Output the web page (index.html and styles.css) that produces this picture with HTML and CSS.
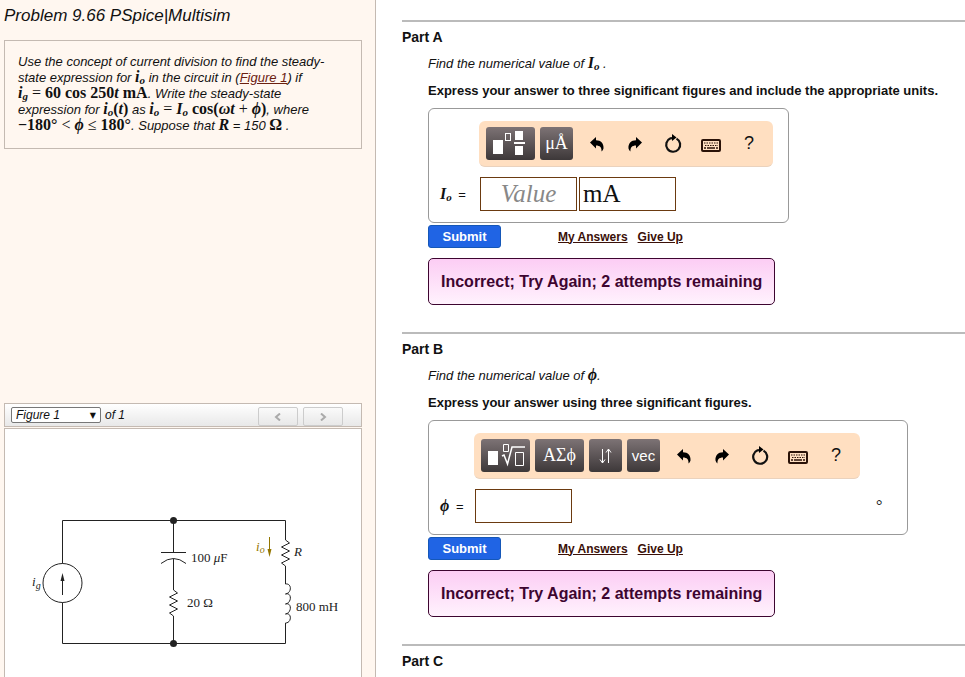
FILE: index.html
```html
<!DOCTYPE html>
<html lang="en">
<head>
    <meta charset="UTF-8">
    <meta name="viewport" content="width=device-width, initial-scale=1.0">
    <title>Problem 9.66 PSpice|Multisim</title>
    <link rel="stylesheet" href="styles.css">
</head>
<body>
    <!-- icons shared by both toolbars -->
    <svg class="sprite" aria-hidden="true">
        <symbol id="undo" viewBox="0 0 16 16">
            <path d="M1 6.5 7 1V4.2C12 4.2 15 7.5 14.5 12.5Q14 14.5 12.5 15.5C12.8 11.5 11 9.5 7 9.5V12.5Z"/>
        </symbol>
        <symbol id="reset" viewBox="0 0 20 20">
            <path d="M13.5 4.6A7 7 0 1 1 7.5 4.3L10 4" fill="none" stroke="#111" stroke-width="2.2"/>
            <path d="M9 0 13.5 3.5 9 7Z"/>
        </symbol>
        <symbol id="keyboard" viewBox="0 0 20 13">
            <rect x="1" y="1" width="18" height="11" rx="1" fill="none" stroke="#2a1208" stroke-width="2"/>
            <path d="M3 4H17M4 6.5H17" stroke="#2a1208" stroke-width="1.2" stroke-dasharray="1.5 1"/>
            <path d="M3 9H5M6 9H14M15 9H17" stroke="#2a1208" stroke-width="1.5"/>
        </symbol>
    </svg>

    <div class="page">
        <aside class="sidebar">
            <h1>Problem 9.66 PSpice|Multisim</h1>

            <div class="problem">
                Use the concept of current division to find the steady-<br>
                state expression for <span class="math"><i>i<sub>o</sub></i></span> in the circuit in (<a href="#figure">Figure 1</a>) if<br>
                <span class="math"><i>i<sub>g</sub></i><span class="op">=</span>60 cos 250<i>t</i> mA</span>. Write the steady-state<br>
                expression for <span class="math"><i>i<sub>o</sub></i>(<i>t</i>)</span> as <span class="math"><i>i<sub>o</sub></i><span class="op">=</span><i>I<sub>o</sub></i> cos(<i>ωt</i><span class="op">+</span><i>ϕ</i>)</span>, where<br>
                <span class="math">−180°<span class="op">&lt;</span><i>ϕ</i><span class="op">≤</span>180°</span>. Suppose that <span class="math"><i>R</i></span> = 150 <span class="math">Ω</span> .
            </div>

            <div class="figure-bar">
                <span class="picker">
                    <select id="figure-select" aria-label="Figure">
                        <option>Figure 1</option>
                    </select>
                </span>
                <label for="figure-select">of 1</label>
                <div class="pager">
                    <button type="button" aria-label="Previous figure"><svg viewBox="0 0 8 8"><path d="M6 0.5 2 4 6 7.5"/></svg></button>
                    <button type="button" aria-label="Next figure"><svg viewBox="0 0 8 8"><path d="M2 0.5 6 4 2 7.5"/></svg></button>
                </div>
            </div>

            <div class="figure" id="figure">
                <svg class="circuit" viewBox="0 0 356 246" role="img" aria-label="Circuit diagram">
                    <!-- wires -->
                    <path class="wire" d="M57.5 133.5V90.5H280.5V110M57.5 172.5V213.5H280.5V193M168.5 90.5V122M168.5 128.5V160M168.5 186V213.5M280.5 136V154"/>
                    <circle cx="168.5" cy="90.5" r="3.5"/>
                    <circle cx="168.5" cy="213.5" r="3.5"/>
                    <!-- current source -->
                    <circle class="wire" cx="57.5" cy="153" r="19.5"/>
                    <path class="wire" d="M57.5 165V149"/>
                    <path d="M57.5 143 59.5 151H55.5Z"/>
                    <!-- capacitor -->
                    <path class="wire" d="M156 122.5H181M156 133.5Q168.5 123.5 181 133.5"/>
                    <!-- resistors -->
                    <path class="wire" d="M168.5 160 172.5 163 164.5 167 172.5 171 164.5 175 172.5 179 164.5 183 168.5 186"/>
                    <path class="wire" d="M280.5 110 284.5 113 276.5 117 284.5 121 276.5 125 284.5 129 276.5 133 280.5 136"/>
                    <!-- inductor -->
                    <path class="wire" d="M280.5 154C287 153 287 163 280.5 164C287 162 287 173 280.5 174C287 172 287 183 280.5 184C287 182 287 193 280.5 193"/>
                    <g class="current">
                        <path class="wire" d="M264.5 107V122"/>
                        <path d="M264.5 127 262.5 119H266.5Z"/>
                        <text x="251" y="121" font-style="italic">i<tspan class="small" dy="2">o</tspan></text>
                    </g>
                    <text x="27" y="156" font-style="italic">i<tspan class="small" dy="3">g</tspan></text>
                    <text x="186" y="132">100 <tspan font-style="italic">μ</tspan>F</text>
                    <text x="182" y="177">20 Ω</text>
                    <text x="289" y="126" font-style="italic">R</text>
                    <text x="291" y="181">800 mH</text>
                </svg>
            </div>
        </aside>

        <main>
            <section class="part">
                <h2>Part A</h2>
                <div class="content">
                    <p class="question">Find the numerical value of <span class="math"><i>I<sub>o</sub></i></span> .</p>
                    <p class="express">Express your answer to three significant figures and include the appropriate units.</p>
                    <div class="answer">
                        <div class="toolbar">
                            <button type="button" class="tool wide" aria-label="Templates">
                                <svg viewBox="0 0 49 33">
                                    <path fill="#fff" d="M7 13H17V27H7ZM29 4H37V13H29ZM29 19H37V28H29ZM28 15H39V17H28Z"/>
                                    <rect x="19.5" y="6.5" width="5" height="7" fill="none" stroke="#fff"/>
                                </svg>
                            </button>
                            <button type="button" class="tool" aria-label="Units">μÅ</button>
                            <div class="icons">
                                <button type="button" aria-label="Undo"><svg class="arrow"><use href="#undo"/></svg></button>
                                <button type="button" aria-label="Redo"><svg class="arrow flip"><use href="#undo"/></svg></button>
                                <button type="button" aria-label="Reset"><svg class="reset"><use href="#reset"/></svg></button>
                                <button type="button" aria-label="Keyboard shortcuts"><svg class="keyboard"><use href="#keyboard"/></svg></button>
                                <button type="button">?</button>
                            </div>
                        </div>
                        <label for="io"><span class="math"><i>I<sub>o</sub></i></span> =</label>
                        <div class="fields">
                            <input type="text" id="io" class="value" placeholder="Value">
                            <input type="text" value="mA" aria-label="Units">
                        </div>
                    </div>
                    <div class="actions">
                        <button type="button" class="submit">Submit</button>
                        <a href="#">My Answers</a>
                        <a href="#">Give Up</a>
                    </div>
                    <div class="feedback">Incorrect; Try Again; 2 attempts remaining</div>
                </div>
            </section>

            <section class="part">
                <h2>Part B</h2>
                <div class="content">
                    <p class="question">Find the numerical value of <span class="math"><i>ϕ</i></span>.</p>
                    <p class="express">Express your answer using three significant figures.</p>
                    <div class="answer angle">
                        <div class="toolbar">
                            <button type="button" class="tool wide" aria-label="Templates">
                                <svg viewBox="0 0 49 33">
                                    <path fill="#fff" d="M7 12H17V26H7Z"/>
                                    <path fill="none" stroke="#fff" d="M22.5 5.5H27.5V12.5H22.5ZM34.5 13.5H42.5V26.5H34.5Z"/>
                                    <path fill="none" stroke="#fff" stroke-width="1.5" d="M21 17 23 16 26.5 25 31 8H44"/>
                                </svg>
                            </button>
                            <button type="button" class="tool wide">ΑΣϕ</button>
                            <button type="button" class="tool" aria-label="Arrows">
                                <svg viewBox="0 0 33 33" fill="none" stroke="#fff">
                                    <path d="M13.5 10V24M11 20.5 13.5 24 16 20.5M19.5 24V10M17 13.5 19.5 10 22 13.5"/>
                                </svg>
                            </button>
                            <button type="button" class="tool vec">vec</button>
                            <div class="icons">
                                <button type="button" aria-label="Undo"><svg class="arrow"><use href="#undo"/></svg></button>
                                <button type="button" aria-label="Redo"><svg class="arrow flip"><use href="#undo"/></svg></button>
                                <button type="button" aria-label="Reset"><svg class="reset"><use href="#reset"/></svg></button>
                                <button type="button" aria-label="Keyboard shortcuts"><svg class="keyboard"><use href="#keyboard"/></svg></button>
                                <button type="button">?</button>
                            </div>
                        </div>
                        <label for="phi"><span class="math"><i>ϕ</i></span> =</label>
                        <div class="fields">
                            <input type="text" id="phi">
                        </div>
                        <span class="unit">°</span>
                    </div>
                    <div class="actions">
                        <button type="button" class="submit">Submit</button>
                        <a href="#">My Answers</a>
                        <a href="#">Give Up</a>
                    </div>
                    <div class="feedback">Incorrect; Try Again; 2 attempts remaining</div>
                </div>
            </section>

            <section class="part">
                <h2>Part C</h2>
            </section>
        </main>
    </div>
</body>
</html>
```
FILE: styles.css
```css
* {
    box-sizing: border-box;
}

body {
    margin: 0;
    font-family: "Liberation Sans", Arial, sans-serif;
    font-size: 13px;
    color: #111;
    background: #fff;
}

button,
input,
select {
    font-family: inherit;
    margin: 0;
}

button {
    cursor: pointer;
}

a {
    color: #3a1008;
}

.sprite {
    display: none;
}

.page {
    display: grid;
    grid-template-columns: 376px 1fr;
    min-height: 100vh;
}

/* Left column */
.sidebar {
    display: flex;
    flex-direction: column;
    padding: 6px 13px 0 4px;
    background: #fff7f0;
    border-right: 1px solid #c4bab2;
}

h1 {
    margin: 0 0 14px;
    font-size: 17px;
    font-weight: normal;
    font-style: italic;
    line-height: 20px;
}

.problem {
    margin-bottom: 254px;
    padding: 13px;
    border: 1px solid #c4bab2;
    font-style: italic;
    line-height: 16px;
    min-height: 109px;
    white-space: nowrap;
}

.problem a {
    color: #6b2010;
}

.math {
    font-family: "Liberation Serif", "Times New Roman", serif;
    font-size: 16px;
    font-weight: bold;
    font-style: normal;
    line-height: 0;
}

.math i {
    font-style: italic;
}

.math sub {
    font-size: 11px;
    line-height: 0;
    vertical-align: -2px;
}

.math .op {
    padding: 0 4px;
    font-weight: normal;
}

.figure-bar {
    display: flex;
    align-items: center;
    height: 24px;
    margin-bottom: 1px;
    padding: 0 18px 0 6px;
    border: 1px solid #c4bab2;
    background: linear-gradient(#fff, #e8e8e8);
    font-size: 12px;
    font-style: italic;
}

.picker {
    position: relative;
    margin-right: 4px;
}

.picker::after {
    content: "▼";
    position: absolute;
    right: 5px;
    top: 4px;
    font-family: "DejaVu Sans", sans-serif;
    font-size: 8px;
    font-style: normal;
    pointer-events: none;
}

.picker select {
    display: block;
    width: 90px;
    height: 16px;
    padding: 0 4px;
    border: 1px solid #777;
    border-radius: 2px;
    background: #fff;
    color: #111;
    font-size: 12px;
    font-style: italic;
    appearance: none;
}

.pager {
    display: flex;
    gap: 5px;
    margin-left: auto;
    align-self: flex-end;
}

.pager button {
    width: 40px;
    height: 19px;
    padding: 0;
    border: 1px solid #ccc;
    border-radius: 2px;
    background: linear-gradient(#fafafa, #e8e8e8);
}

.pager svg {
    width: 8px;
    height: 8px;
    fill: none;
    stroke: #aaa;
    stroke-width: 2;
}

.figure {
    flex: 1;
    padding-top: 1px;
    border: 1px solid #c4bab2;
    border-bottom: 0;
    background: #fff;
}

.circuit {
    display: block;
    width: 100%;
    font-family: "Liberation Serif", "Times New Roman", serif;
    font-size: 13px;
    fill: #222;
}

.circuit .wire {
    fill: none;
    stroke: #222;
}

.circuit .small {
    font-size: 10px;
}

.circuit .current {
    fill: #947600;
}

.circuit .current .wire {
    stroke: #947600;
}

/* Right column */
main {
    padding: 20px 0 0 26px;
}

.part {
    padding-top: 7px;
    border-top: 2px solid #bbb;
}

.content {
    padding: 9px 0 27px 26px;
}

h2 {
    margin: 0;
    font-size: 14px;
    line-height: 16px;
}

.question {
    margin: 0 0 8px;
    font-style: italic;
    line-height: 20px;
}

.express {
    margin: 0 0 8px;
    font-weight: bold;
    line-height: 18px;
}

.answer {
    display: inline-grid;
    grid-template-columns: 39px auto;
    row-gap: 10px;
    align-items: center;
    padding: 12px 15px 11px 11px;
    border: 1px solid #999;
    border-radius: 6px;
    vertical-align: top;
}

.answer.angle {
    grid-template-columns: 34px auto 32px;
}

.answer label {
    grid-column: 1;
}

.answer label .math {
    margin-right: 3px;
}

.toolbar {
    grid-column: 2;
    display: flex;
    align-items: center;
    gap: 5px;
    height: 46px;
    padding: 0 5px 0 7px;
    border-radius: 6px;
    background: #ffdfc1;
    border-bottom: 1px solid #ead2bd;
}

.tool {
    width: 33px;
    height: 33px;
    padding: 0;
    border: 0;
    border-radius: 3px;
    background: linear-gradient(#7d7375, #3d3839);
    color: #fff;
    font-family: "Liberation Serif", "Times New Roman", serif;
    font-size: 18px;
    line-height: 33px;
}

.tool.wide {
    width: 49px;
}

.tool.vec {
    font-family: "Liberation Sans", Arial, sans-serif;
    font-size: 15px;
}

.tool svg {
    display: block;
}

.icons {
    display: flex;
}

.icons button {
    display: flex;
    align-items: center;
    justify-content: center;
    width: 38px;
    height: 33px;
    padding: 0;
    border: 0;
    background: none;
    color: #111;
    font-size: 18px;
}

.arrow {
    width: 16px;
    height: 16px;
}

.flip {
    transform: scaleX(-1);
}

.reset {
    width: 20px;
    height: 20px;
}

.keyboard {
    width: 20px;
    height: 13px;
    margin-top: 4px;
}

.fields {
    display: flex;
    gap: 2px;
    padding-left: 1px;
}

.fields input {
    width: 97px;
    height: 34px;
    padding: 0 3px;
    border: 1px solid #6b3a10;
    border-radius: 0;
    background: #fff;
    color: #111;
    font-family: "Liberation Serif", "Times New Roman", serif;
    font-size: 25px;
}

.fields .value {
    padding: 0;
    text-align: center;
}

.fields .value::placeholder {
    color: #888;
    font-style: italic;
}

.unit {
    padding-left: 16px;
    font-family: "Liberation Serif", "Times New Roman", serif;
    font-size: 16px;
}

.actions {
    display: flex;
    align-items: center;
    margin: 2px 0 10px;
    font-size: 12px;
    font-weight: bold;
}

.actions a {
    margin-right: 10px;
}

.submit {
    width: 73px;
    height: 23px;
    margin-right: 57px;
    padding: 0;
    border: 1px solid #1557b8;
    border-radius: 3px;
    background: #2064e4;
    color: #fff;
    font-size: 13px;
    font-weight: bold;
}

.feedback {
    width: fit-content;
    padding: 0 12px;
    border: 1px solid #3d0530;
    border-radius: 5px;
    background: linear-gradient(#fccdf4, #fff2fd);
    color: #3d0530;
    font-size: 16px;
    font-weight: bold;
    line-height: 45px;
}
```
